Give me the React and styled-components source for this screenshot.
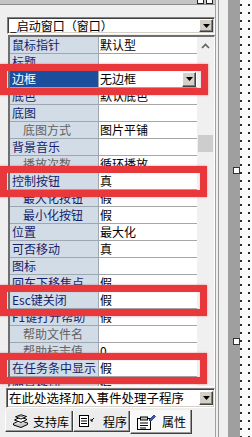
import React from 'react';
import styled, { createGlobalStyle } from 'styled-components';

const FONT = `"Noto Sans CJK SC", "Noto Sans", sans-serif`;

const GlobalStyle = createGlobalStyle`
  html, body { margin: 0; padding: 0; background: #efefef; }
  body { font-family: ${FONT}; font-size: 12px; }
  * { box-sizing: border-box; }
`;

const Screen = styled.div`
  display: flex;
  width: 252px;
  height: 437px;
  overflow: hidden;
  background: #efefef;
`;

const Panel = styled.div`
  position: relative;
  width: 215px;
  flex-shrink: 0;
  display: flex;
  flex-direction: column;
`;

const TitleStrip = styled.div`
  height: 5px;
  background: #c4c4c4;
  border-bottom: 1px solid #8a8a8a;
  display: flex;
  justify-content: flex-end;
  gap: 2px;
  padding-right: 2px;
`;

const StripBtn = styled.div`
  width: 7px;
  height: 4px;
  border: 1px solid #222;
  border-top: none;
  background: #fff;
`;

const Combo = styled.div`
  margin: ${(p) => p.$mt}px 0 0 ${(p) => p.$ml}px;
  width: ${(p) => p.$w}px;
  height: ${(p) => p.$h}px;
  display: flex;
  align-items: center;
  background: #fff;
  border: 1px solid;
  border-color: #808080 #ffffff #ffffff #808080;
  box-shadow: inset 1px 1px 0 #404040, inset -1px -1px 0 #d4d0c8;
  padding: 0 1px 0 2px;
`;

const ComboText = styled.span`
  flex: 1;
  font-size: ${(p) => p.$fs}px;
  line-height: ${(p) => p.$lh}px;
  color: #000;
  white-space: nowrap;
  overflow: hidden;
`;

const DropBtn = styled.div`
  width: 14px;
  height: ${(p) => p.$h}px;
  flex-shrink: 0;
  background: #d4d0c8;
  border: 1px solid;
  border-color: #ffffff #404040 #404040 #ffffff;
  box-shadow: inset -1px -1px 0 #808080;
  display: flex;
  align-items: center;
  justify-content: center;
`;

const Grid = styled.div`
  margin: 1px 0 0 8px;
  width: 207px;
  height: 352px;
  display: flex;
  border-style: solid;
  border-width: 2px 1px 1px 2px;
  border-color: #6e6e6e #ffffff #ffffff #6e6e6e;
  overflow: hidden;
  background: #fff;
`;

const Rows = styled.div`
  width: 187px;
  height: 350px;
  overflow: hidden;
  display: flex;
  flex-direction: column;
`;

const Row = styled.div`
  display: flex;
  height: 17px;
  flex-shrink: 0;
`;

const NameCell = styled.div`
  width: 89px;
  padding-left: ${(p) => (p.$sub ? 13 : 2)}px;
  background: ${(p) => (p.$sel ? '#1b4f9e' : '#d2dce7')};
  color: ${(p) => (p.$sel ? '#ffffff' : p.$dim ? '#626262' : '#141f6c')};
  border-bottom: 1px solid #9ea6b0;
  border-right: 1px solid #9ea6b0;
  line-height: 16px;
  font-size: 12px;
  white-space: nowrap;
  overflow: hidden;
`;

const ValueCell = styled.div`
  flex: 1;
  display: flex;
  align-items: center;
  padding-left: 1px;
  padding-right: 1px;
  border-bottom: 1px solid #a6a6a6;
  color: #000;
  font-size: 12px;
  line-height: 16px;
  white-space: nowrap;
`;

const ValueText = styled.span`
  flex: 1;
`;

const ScrollBar = styled.div`
  width: 17px;
  background: #f0f0f0;
  display: flex;
  flex-direction: column;
  align-items: center;
`;

const ScrollArrow = styled.div`
  height: 17px;
  width: 17px;
  display: flex;
  align-items: center;
  justify-content: center;
`;

const Thumb = styled.div`
  margin-top: 81px;
  width: 15px;
  height: 17px;
  background: #cdcdcd;
`;

const Mark = styled.div`
  position: absolute;
  left: 0;
  top: ${(p) => 30 + 17 * p.$row}px;
  width: ${(p) => p.$w}px;
  height: 31px;
  border: 7px solid #e8383b;
  box-shadow: 0 0 2px rgba(232, 56, 59, 0.6), inset 0 0 1px rgba(232, 56, 59, 0.5);
  pointer-events: none;
`;

const TabBar = styled.div`
  display: flex;
  align-items: flex-start;
  margin: 2px 0 0 5px;
  height: 25px;
`;

const Tab = styled.div`
  display: flex;
  align-items: center;
  width: ${(p) => p.$w}px;
  height: ${(p) => (p.$active ? 24 : 21)}px;
  margin-top: ${(p) => (p.$active ? 0 : 1)}px;
  padding-left: ${(p) => p.$pl}px;
  gap: ${(p) => p.$gap}px;
  background: ${(p) => (p.$active ? '#f8f8f8' : '#ececec')};
  border-style: solid;
  border-width: 0 1px 1px 1px;
  border-color: #ffffff #404040 #404040 #ffffff;
  box-shadow: inset -1px -1px 0 #9a9a9a;
  font-size: 12px;
  color: #000;
  white-space: nowrap;
`;

const Splitter = styled.div`
  width: 13px;
  flex-shrink: 0;
  border-left: 1px solid #a0a0a0;
  display: flex;
`;

const SplitLine = styled.div`
  margin-left: 2px;
  width: 1px;
  background: #9a9a9a;
`;

const DarkBar = styled.div`
  position: relative;
  width: 12px;
  flex-shrink: 0;
  background: #9f9f9f;
`;

const Handle = styled.div`
  position: absolute;
  left: 5px;
  top: ${(p) => p.$top}px;
  width: 7px;
  height: 7px;
  background: #fff;
  border: 1px solid #333;
`;

const Canvas = styled.div`
  flex: 1;
  background-color: #fafafa;
  background-image: radial-gradient(circle, #222 0.7px, transparent 1px);
  background-size: 8px 8px;
  background-position: -3px 1px;
`;

const DownArrow = () => (
  <svg width="7" height="4" viewBox="0 0 7 4">
    <path d="M0 0 H7 L3.5 4 Z" fill="#000" />
  </svg>
);

const UpChevron = () => (
  <svg width="9" height="6" viewBox="0 0 9 6">
    <path d="M1 5 L4.5 1.5 L8 5" fill="none" stroke="#606060" strokeWidth="1.6" />
  </svg>
);

const LibIcon = () => (
  <svg width="17" height="14" viewBox="0 0 17 14">
    <path d="M1.5 9.5 L8 6.5 L15.5 9 L9 12.5 Z" fill="#fff" stroke="#000" />
    <path d="M1.5 9.5 V11 L9 13.5 L15.5 10.5 V9" fill="#c8c8c8" stroke="#000" />
    <path d="M2.5 6 L8.5 3 L15 5.5 L9 8.5 Z" fill="#fff" stroke="#000" />
    <path d="M3.5 2.8 L9 0.8 L14.5 2.5 L9 5 Z" fill="#fff" stroke="#000" />
    <path d="M6 3 Q9 1.5 11.5 3" fill="none" stroke="#555" strokeWidth="0.8" />
  </svg>
);

const ProgIcon = () => (
  <svg width="18" height="14" viewBox="0 0 18 14">
    <rect x="1.5" y="1.5" width="9" height="11" fill="#fff" stroke="#000" />
    <line x1="3" y1="4.5" x2="9" y2="4.5" stroke="#000" />
    <line x1="3" y1="7" x2="9" y2="7" stroke="#000" />
    <line x1="3" y1="9.5" x2="9" y2="9.5" stroke="#000" />
    <path d="M16 4 L13 7 M13 5 V7 H15" fill="none" stroke="#000" />
  </svg>
);

const PropIcon = () => (
  <svg width="21" height="16" viewBox="0 0 21 16">
    <rect x="1.5" y="4.5" width="13" height="11" fill="#fff" stroke="#000" />
    <rect x="4.5" y="3" width="7" height="3" fill="#c8c8c8" stroke="#000" />
    <line x1="4" y1="9" x2="12" y2="9" stroke="#000" />
    <line x1="4" y1="11.5" x2="12" y2="11.5" stroke="#000" />
    <line x1="4" y1="14" x2="10" y2="14" stroke="#000" />
    <path d="M13 6 L18 1 L19.5 2.5 L14.5 7.5 Z" fill="#3b5bb5" stroke="#1a2a70" strokeWidth="0.8" />
  </svg>
);

const rows = [
  { n: '鼠标指针', v: '默认型' },
  { n: '标题', v: '' },
  { n: '边框', v: '无边框', sel: true },
  { n: '底色', v: '默认底色' },
  { n: '底图', v: '' },
  { n: '底图方式', v: '图片平铺', sub: true, dim: true },
  { n: '背景音乐', v: '' },
  { n: '播放次数', v: '循环播放', sub: true, dim: true },
  { n: '控制按钮', v: '真' },
  { n: '最大化按钮', v: '假', sub: true },
  { n: '最小化按钮', v: '假', sub: true },
  { n: '位置', v: '最大化' },
  { n: '可否移动', v: '真' },
  { n: '图标', v: '' },
  { n: '回车下移焦点', v: '假' },
  { n: 'Esc键关闭', v: '假' },
  { n: 'F1键打开帮助', v: '假' },
  { n: '帮助文件名', v: '', sub: true, dim: true },
  { n: '帮助标志值', v: '0', sub: true, dim: true },
  { n: '在任务条中显示', v: '假' },
  { n: '随意移动', v: '假' },
];

const marks = [
  { row: 2, w: 208 },
  { row: 8, w: 207 },
  { row: 15, w: 207 },
  { row: 19, w: 207 },
];

export default function App() {
  return (
    <>
      <GlobalStyle />
      <Screen>
        <Panel>
          <TitleStrip>
            <StripBtn />
            <StripBtn />
          </TitleStrip>
          <Combo $mt={12} $ml={7} $w={208} $h={17}>
            <ComboText $fs={12} $lh={15}>_启动窗口（窗口）</ComboText>
            <DropBtn $h={13}>
              <DownArrow />
            </DropBtn>
          </Combo>
          <Grid>
            <Rows>
              {rows.map((r) => (
                <Row key={r.n}>
                  <NameCell $sub={r.sub} $dim={r.dim} $sel={r.sel}>
                    {r.n}
                  </NameCell>
                  <ValueCell>
                    <ValueText>{r.v}</ValueText>
                    {r.sel && (
                      <DropBtn $h={15}>
                        <DownArrow />
                      </DropBtn>
                    )}
                  </ValueCell>
                </Row>
              ))}
            </Rows>
            <ScrollBar>
              <ScrollArrow>
                <UpChevron />
              </ScrollArrow>
              <Thumb />
            </ScrollBar>
          </Grid>
          <Combo $mt={1} $ml={6} $w={209} $h={20}>
            <ComboText $fs={12.5} $lh={18}>在此处选择加入事件处理子程序</ComboText>
            <DropBtn $h={14}>
              <DownArrow />
            </DropBtn>
          </Combo>
          <TabBar>
            <Tab $w={68} $pl={6} $gap={4}>
              <LibIcon />
              支持库
            </Tab>
            <Tab $w={57} $pl={4} $gap={7}>
              <ProgIcon />
              程序
            </Tab>
            <Tab $w={62} $pl={5} $gap={5} $active>
              <PropIcon />
              属性
            </Tab>
          </TabBar>
          {marks.map((m) => (
            <Mark key={m.row} $row={m.row} $w={m.w} />
          ))}
        </Panel>
        <Splitter>
          <SplitLine />
        </Splitter>
        <DarkBar>
          <Handle $top={167} />
          <Handle $top={338} />
        </DarkBar>
        <Canvas />
      </Screen>
    </>
  );
}
